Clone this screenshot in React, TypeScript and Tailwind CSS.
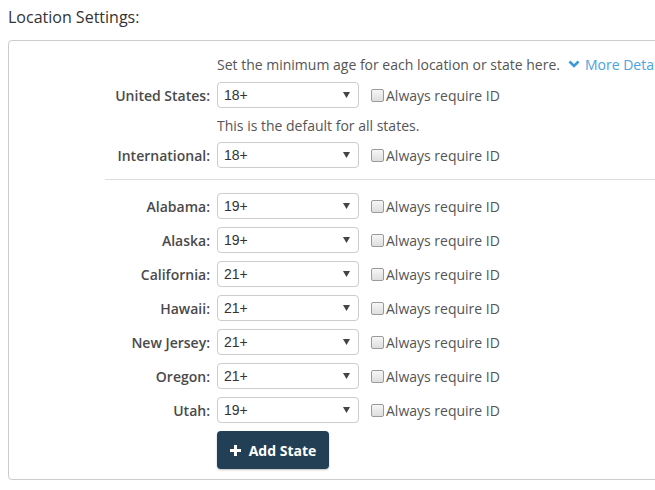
const font = { fontFamily: '"Open Sans", sans-serif' };

const states = [
  { name: 'Alabama', age: '19+' },
  { name: 'Alaska', age: '19+' },
  { name: 'California', age: '21+' },
  { name: 'Hawaii', age: '21+' },
  { name: 'New Jersey', age: '21+' },
  { name: 'Oregon', age: '21+' },
  { name: 'Utah', age: '19+' },
];

function AgeSelect({ value }: { value: string }) {
  return (
    <div className="w-[142px] h-[26px] bg-white border border-[#cccccc] rounded-[4px] flex items-center justify-between pl-[6px] pr-[8px] font-['Liberation_Sans',sans-serif] text-[14px] text-[#333]">
      <span>{value}</span>
      <svg width="7" height="6" viewBox="0 0 7 6">
        <path d="M0 0 H7 L3.5 6 Z" fill="#444" />
      </svg>
    </div>
  );
}

function Row({ label, value }: { label: string; value: string }) {
  return (
    <div className="flex items-center h-[26px]">
      <div className="w-[201px] text-right font-semibold text-[14px] text-[#4a4a4a]">{label}:</div>
      <div className="ml-[7px]">
        <AgeSelect value={value} />
      </div>
      <label className="flex items-center ml-[12px] text-[14px] text-[#555]">
        <span className="w-[13px] h-[13px] rounded-[2px] border border-[#9a9a9a] bg-gradient-to-b from-[#f6f6f6] to-[#dedede]" />
        <span className="ml-[2px]">Always require ID</span>
      </label>
    </div>
  );
}

export default function App() {
  return (
    <div className="w-[655px] h-[490px] overflow-hidden bg-white" style={font}>
      <div className="pl-[8px] pt-[6px] text-[16px] leading-[22px] text-[#333]">Location Settings:</div>
      <div className="ml-[8px] mt-[12px] w-[700px] border border-[#cccccc] rounded-[4px] pt-[13px] pb-[10px]">
        <div className="flex items-center h-[20px] ml-[208px] text-[14px] text-[#555] whitespace-nowrap">
          <span>Set the minimum age for each location or state here.</span>
          <svg className="ml-[8px]" width="12" height="9" viewBox="0 0 12 9">
            <path d="M1.5 1.5 L6 6 L10.5 1.5" stroke="#3a9ad9" strokeWidth="2.6" fill="none" />
          </svg>
          <span className="ml-[5px] text-[#4aa3df]">More Details</span>
        </div>
        <div className="mt-[8px]">
          <Row label="United States" value="18+" />
        </div>
        <div className="mt-[8px] ml-[208px] h-[20px] leading-[20px] text-[14px] text-[#555]">
          This is the default for all states.
        </div>
        <div className="mt-[6px]">
          <Row label="International" value="18+" />
        </div>
        <div className="mt-[11px] ml-[96px] border-t border-[#dddddd]" />
        <div className="mt-[13px] flex flex-col gap-[8px]">
          {states.map((s) => (
            <Row key={s.name} label={s.name} value={s.age} />
          ))}
        </div>
        <div className="mt-[8px] ml-[208px]">
          <button className="w-[112px] h-[38px] rounded-[4px] bg-[#233f56] text-white font-bold text-[14px] flex items-center justify-center gap-[8px] shadow-[0_1px_2px_rgba(0,0,0,0.25)]">
            <svg width="11" height="11" viewBox="0 0 11 11">
              <path d="M5.5 0 V11 M0 5.5 H11" stroke="#fff" strokeWidth="3" />
            </svg>
            <span>Add State</span>
          </button>
        </div>
      </div>
    </div>
  );
}
